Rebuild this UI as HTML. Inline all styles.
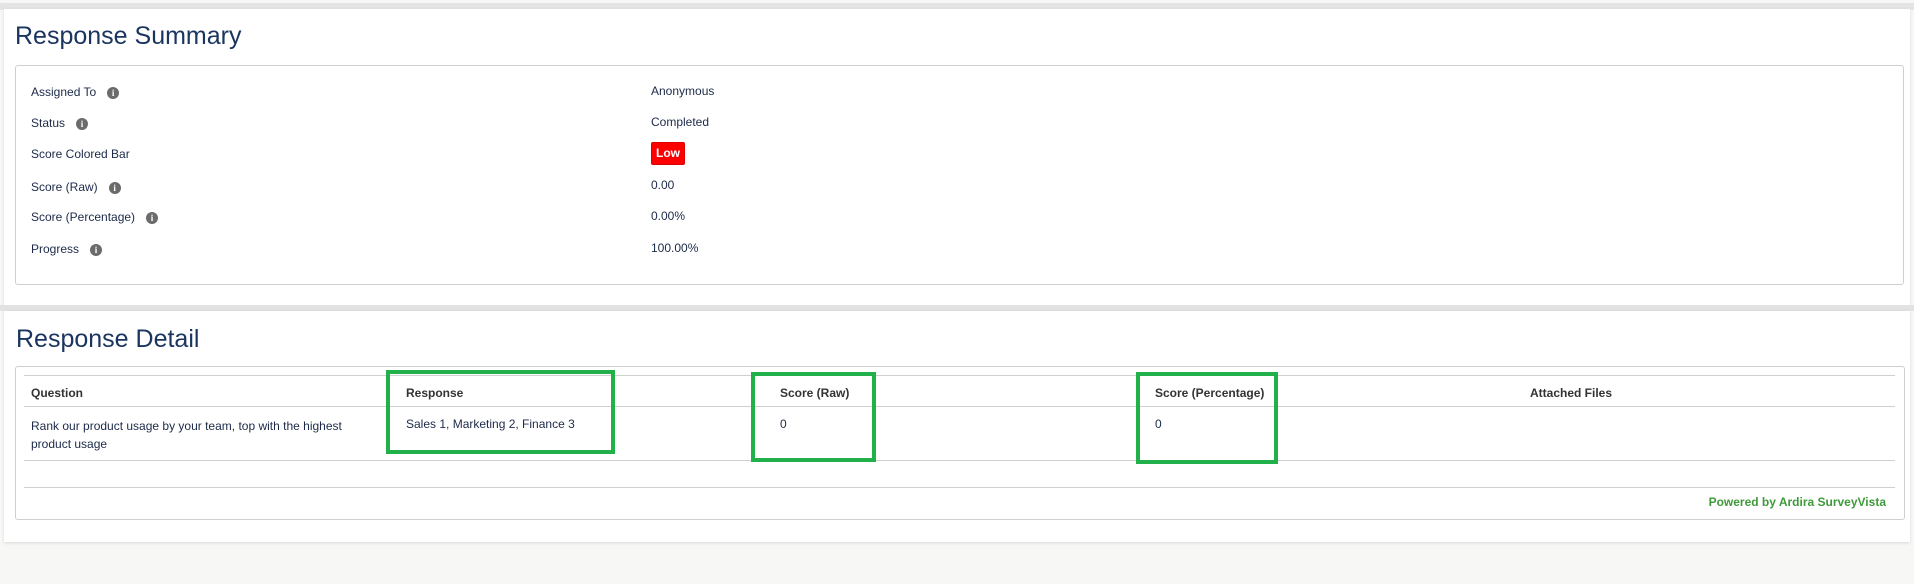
<!DOCTYPE html>
<html><head><meta charset="utf-8"><style>
*{box-sizing:border-box;margin:0;padding:0}
body{width:1914px;height:584px;background:#f7f7f5;font-family:"Liberation Sans",sans-serif;color:#1c2a48;font-size:12px;position:relative;overflow:hidden}
.band{position:absolute;left:0;width:1914px;background:#e2e2e2}
.card{position:absolute;left:4px;width:1906px;background:#fff;box-shadow:0 1px 3px rgba(0,0,0,.12)}
.t{position:absolute;white-space:nowrap}
h1{position:absolute;font-weight:normal;font-size:25px;color:#1a3560;white-space:nowrap}
.box{position:absolute;border:1px solid #cfcfcf;border-radius:3px}
.ic{display:inline-block;width:12px;height:12px;border-radius:50%;background:#6b6b6b;color:#fff;font-size:9px;font-weight:bold;text-align:center;line-height:12px;vertical-align:middle;margin-left:11px;font-family:"Liberation Serif",serif}
.hl{position:absolute;left:24px;width:1871px;height:1px;background:#cfcfcf}
.th{font-weight:bold;color:#333}
.g{position:absolute;border:4px solid #22b04b}
</style></head><body>
<div class="band" style="top:3px;height:7px;background:#e4e4e4"></div>
<div class="card" style="top:9px;height:296px"></div>
<h1 style="left:15px;top:22px">Response Summary</h1>
<div class="box" style="left:15px;top:65px;width:1889px;height:220px"></div>
<div class="t" style="left:31px;top:85px">Assigned To<span class="ic">i</span></div>
<div class="t" style="left:31px;top:116px">Status<span class="ic">i</span></div>
<div class="t" style="left:31px;top:147px">Score Colored Bar</div>
<div class="t" style="left:31px;top:180px">Score (Raw)<span class="ic">i</span></div>
<div class="t" style="left:31px;top:210px">Score (Percentage)<span class="ic">i</span></div>
<div class="t" style="left:31px;top:242px">Progress<span class="ic">i</span></div>
<div class="t" style="left:651px;top:84px">Anonymous</div>
<div class="t" style="left:651px;top:115px">Completed</div>
<div class="t" style="left:651px;top:142px;width:34px;height:23px;background:#f00;border:1px solid #d00;border-radius:2px;color:#fff;font-weight:bold;font-size:12px;text-align:center;line-height:21px">Low</div>
<div class="t" style="left:651px;top:178px">0.00</div>
<div class="t" style="left:651px;top:209px">0.00%</div>
<div class="t" style="left:651px;top:241px">100.00%</div>

<div class="band" style="top:305px;height:6px"></div>
<div class="card" style="top:311px;height:231px"></div>
<h1 style="left:16px;top:325px">Response Detail</h1>
<div class="box" style="left:15px;top:366px;width:1890px;height:154px"></div>
<div class="hl" style="top:375px"></div>
<div class="hl" style="top:406px"></div>
<div class="hl" style="top:460px"></div>
<div class="hl" style="top:487px"></div>
<div class="t th" style="left:31px;top:386px">Question</div>
<div class="t th" style="left:406px;top:386px">Response</div>
<div class="t th" style="left:780px;top:386px">Score (Raw)</div>
<div class="t th" style="left:1155px;top:386px">Score (Percentage)</div>
<div class="t th" style="left:1530px;top:386px">Attached Files</div>
<div class="t" style="left:31px;top:417px;line-height:18px">Rank our product usage by your team, top with the highest<br>product usage</div>
<div class="t" style="left:406px;top:417px">Sales 1, Marketing 2, Finance 3</div>
<div class="t" style="left:780px;top:417px">0</div>
<div class="t" style="left:1155px;top:417px">0</div>
<div class="g" style="left:386px;top:370px;width:229px;height:84px"></div>
<div class="g" style="left:751px;top:372px;width:125px;height:90px"></div>
<div class="g" style="left:1136px;top:372px;width:142px;height:92px"></div>
<div class="t" style="right:28px;top:495px;color:#3f9a3a;font-weight:bold">Powered by Ardira SurveyVista</div>
</body></html>
